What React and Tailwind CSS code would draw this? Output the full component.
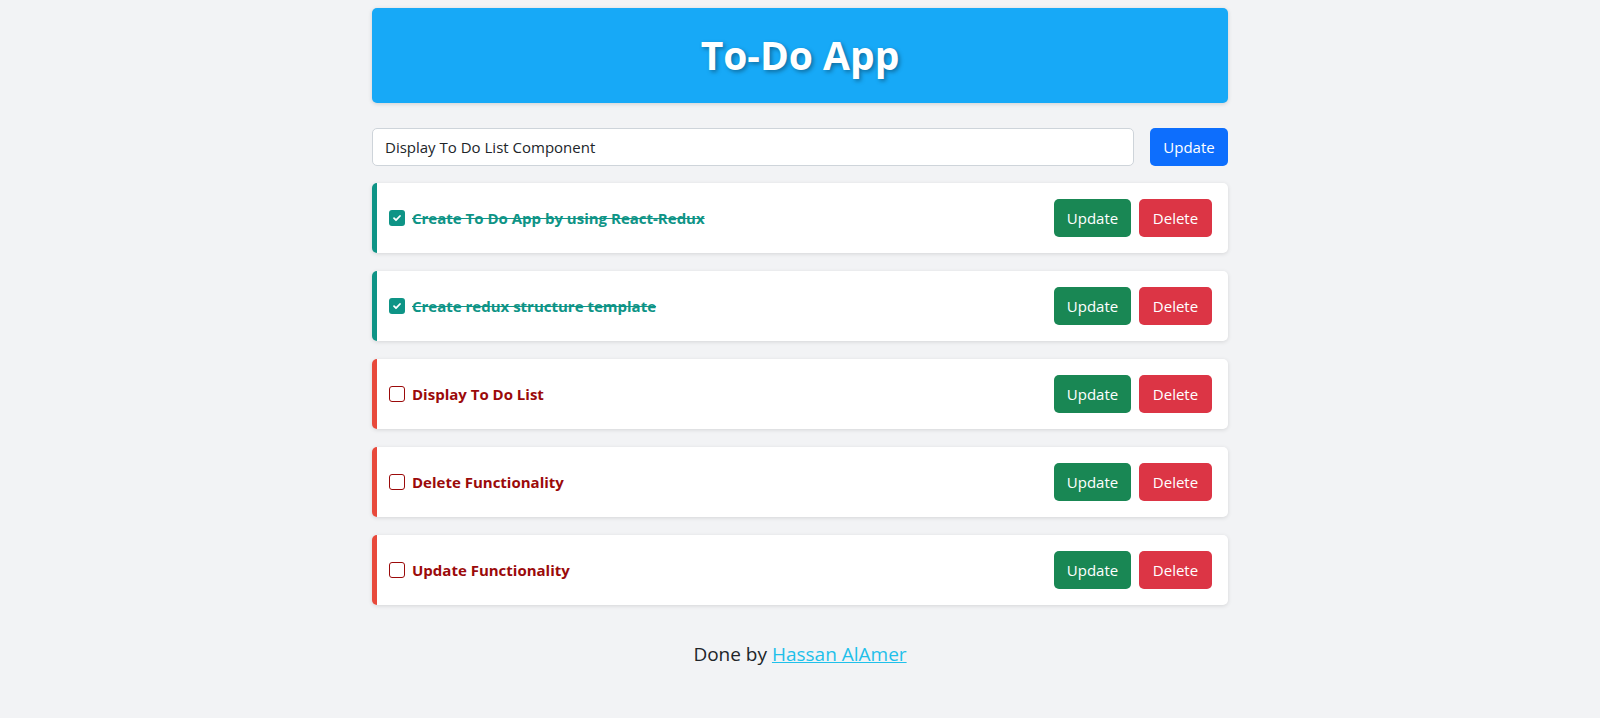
import { useState } from 'react';

const initialTodos = [
  { id: 1, title: 'Create To Do App by using React-Redux', done: true },
  { id: 2, title: 'Create redux structure template', done: true },
  { id: 3, title: 'Display To Do List', done: false },
  { id: 4, title: 'Delete Functionality', done: false },
  { id: 5, title: 'Update Functionality', done: false },
];

function CheckBox({ checked, onChange }) {
  return (
    <button
      onClick={onChange}
      className={`w-[16px] h-[16px] rounded-[3px] flex items-center justify-center shrink-0 ${checked ? 'bg-[#0e9486]' : 'bg-white border border-[#9b0a0a]'}`}
    >
      {checked && (
        <svg width="10" height="10" viewBox="0 0 10 10" fill="none">
          <path d="M2 5.2l2 2L8 3" stroke="white" strokeWidth="1.8" strokeLinecap="round" strokeLinejoin="round" />
        </svg>
      )}
    </button>
  );
}

function TodoItem({ todo, onToggle, onDelete }) {
  return (
    <div
      className={`flex items-center justify-between bg-white rounded-[5px] border-l-[5px] shadow-[0_1px_4px_rgba(0,0,0,0.12)] pl-[12px] pr-[16px] h-[70px] ${todo.done ? 'border-[#0e9486]' : 'border-[#e8493b]'}`}
    >
      <div className="flex items-center gap-[7px]">
        <CheckBox checked={todo.done} onChange={onToggle} />
        <span className={`font-bold text-[15px] ${todo.done ? 'text-[#0e9486] line-through' : 'text-[#9b0a0a]'}`}>{todo.title}</span>
      </div>
      <div className="flex gap-[8px]">
        <button className="w-[77px] h-[38px] bg-[#198754] text-white rounded-[5px] text-[15px]">Update</button>
        <button onClick={onDelete} className="w-[73px] h-[38px] bg-[#dc3545] text-white rounded-[5px] text-[15px]">Delete</button>
      </div>
    </div>
  );
}

export default function App() {
  const [todos, setTodos] = useState(initialTodos);
  const [text, setText] = useState('Display To Do List Component');

  const toggle = (id) => setTodos(todos.map((t) => (t.id === id ? { ...t, done: !t.done } : t)));
  const remove = (id) => setTodos(todos.filter((t) => t.id !== id));

  return (
    <div className="min-h-screen bg-[#f2f3f5] text-[#212529]" style={{ fontFamily: '"Open Sans", "Noto Sans", sans-serif' }}>
      <div className="w-[856px] mx-auto pt-[8px]">
        <div className="h-[95px] bg-[#17a9f7] rounded-[5px] shadow-[0_1px_4px_rgba(0,0,0,0.15)] flex items-center justify-center">
          <h1 className="text-white font-bold text-[39px] [text-shadow:2px_2px_4px_rgba(0,0,0,0.35)]">To-Do App</h1>
        </div>

        <div className="flex gap-[16px] mt-[25px]">
          <input
            value={text}
            onChange={(e) => setText(e.target.value)}
            className="flex-1 h-[38px] bg-white border border-[#ced4da] rounded-[5px] px-[12px] text-[15px] text-[#212529] outline-none"
          />
          <button className="w-[78px] h-[38px] bg-[#0d6efd] text-white rounded-[5px] text-[15px]">Update</button>
        </div>

        <div className="flex flex-col gap-[18px] mt-[17px]">
          {todos.map((t) => (
            <TodoItem key={t.id} todo={t} onToggle={() => toggle(t.id)} onDelete={() => remove(t.id)} />
          ))}
        </div>

        <p className="text-center text-[19px] mt-[35px]">
          Done by <a href="#" className="text-[#1fc0ea] underline">Hassan AlAmer</a>
        </p>
      </div>
    </div>
  );
}
